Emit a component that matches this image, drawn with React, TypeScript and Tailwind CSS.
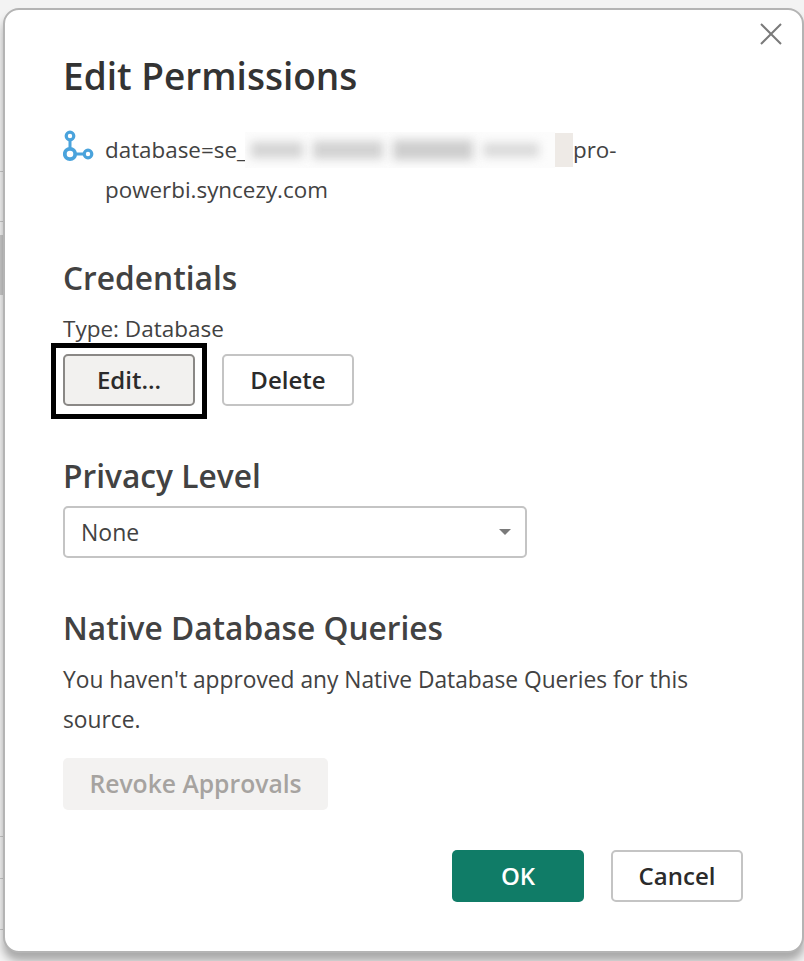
function Btn({ children, className }: { children: React.ReactNode; className: string }) {
  return (
    <button className={"h-[52px] rounded-[5px] font-semibold flex items-center justify-center " + className}>
      {children}
    </button>
  );
}

function Backdrop() {
  return (
    <>
      <div className="absolute left-0 w-[4px] top-[171px] h-[1px] bg-[#c8c8c8]" />
      <div className="absolute left-0 w-[4px] top-[221px] h-[1px] bg-[#c8c8c8]" />
      <div className="absolute left-0 w-[4px] top-[235px] h-[60px] bg-[#c9c9c9]" />
      <div className="absolute left-0 w-[4px] top-[836px] h-[1px] bg-[#c8c8c8]" />
      <div className="absolute left-0 w-[4px] top-[878px] h-[1px] bg-[#c8c8c8]" />
      <div className="absolute left-0 w-[4px] top-[929px] h-[1px] bg-[#c8c8c8]" />
      <div className="absolute right-0 w-[2px] top-[171px] h-[1px] bg-[#c8c8c8]" />
      <div className="absolute right-0 w-[2px] top-[221px] h-[1px] bg-[#c8c8c8]" />
      <div className="absolute right-0 w-[2px] top-[836px] h-[1px] bg-[#c8c8c8]" />
    </>
  );
}

export default function App() {
  return (
    <div className="relative w-[804px] h-[961px] bg-[#f3f3f3] overflow-hidden pt-2 pl-[3px] font-['Open_Sans','Noto_Sans',sans-serif]">
      <Backdrop />
      <div className="relative w-[801px] h-[945px] bg-white border-2 border-[#b4b4b4] rounded-[16px] pl-[58px] pt-[41px] text-[#424242] shadow-[0_8px_8px_rgba(0,0,0,0.3)]">
        <button className="absolute top-[12px] right-[19px] text-[#7a7a7a]">
          <svg width="24" height="24" viewBox="0 0 24 24" fill="none" stroke="currentColor" strokeWidth="2">
            <path d="M2 2 L22 22 M22 2 L2 22" />
          </svg>
        </button>
        <h1 className="text-[37px] leading-[50px] font-semibold text-[#333]">Edit Permissions</h1>
        <div className="flex mt-[29px] h-[82px]">
          <svg width="32" height="32" viewBox="0 0 32 32" fill="none" stroke="#4aa3dc" className="shrink-0">
            <circle cx="7" cy="6" r="3.8" strokeWidth="3.2" />
            <circle cx="7" cy="24" r="5.2" strokeWidth="3.8" />
            <circle cx="25" cy="24" r="3.8" strokeWidth="3.2" />
            <path d="M7 10 V19 M12 24 H21" strokeWidth="3" />
          </svg>
          <div className="ml-[10px] w-[560px] text-[22.4px] leading-[40px] text-[#424242]">
            <div className="flex items-center">
              <span className="w-[140px] shrink-0 whitespace-nowrap">database=se_</span>
              <span className="w-[310px] h-[36px] bg-[#fcfcfc] shrink-0 flex items-center gap-[10px] pl-[6px] overflow-hidden">
                <span className="w-[52px] h-[16px] bg-[#d4d4d4] blur-[5px]" />
                <span className="w-[70px] h-[18px] bg-[#d2d2d2] blur-[5px]" />
                <span className="w-[80px] h-[20px] bg-[#cecece] blur-[5px]" />
                <span className="w-[56px] h-[14px] bg-[#dadada] blur-[5px]" />
              </span>
              <span className="w-[18px] h-[34px] bg-[#eeeae6] shrink-0" />
              <span>pro-</span>
            </div>
            <div>powerbi.syncezy.com</div>
          </div>
        </div>
        <h2 className="mt-[44px] text-[31.7px] leading-[44px] font-semibold">Credentials</h2>
        <div className="mt-[14px] text-[22.5px] leading-[30px]">Type: Database</div>
        <div className="flex items-center mt-[10px] gap-[27px]">
          <div className="relative">
            <div className="absolute -top-[11px] -bottom-[13px] -left-[12px] -right-[12px] border-[5px] border-black" />
            <Btn className="w-[132px] text-[24px] bg-[#f2f1ef] border-2 border-[#8a8886] text-[#2b2b2b]">Edit...</Btn>
          </div>
          <Btn className="w-[132px] text-[24px] bg-white border-2 border-[#c4c4c4] text-[#2b2b2b]">Delete</Btn>
        </div>
        <h2 className="mt-[48px] text-[31.7px] leading-[44px] font-semibold">Privacy Level</h2>
        <button className="mt-[8px] w-[464px] h-[52px] rounded-[5px] border-2 border-[#c4c4c4] flex items-center justify-between pl-[16px] pr-[14px] text-[23px]">
          <span>None</span>
          <svg width="12" height="6" viewBox="0 0 12 6"><path d="M0 0 H12 L6 6 Z" fill="#7a7a7a" /></svg>
        </button>
        <h2 className="mt-[48px] text-[31.7px] leading-[44px] font-semibold">Native Database Queries</h2>
        <p className="mt-[10px] w-[660px] text-[22.75px] leading-[40px]">You haven't approved any Native Database Queries for this source.</p>
        <Btn className="mt-[18px] w-[265px] text-[24.7px] bg-[#f3f2f1] text-[#a6a3a0]">Revoke Approvals</Btn>
        <div className="flex justify-end gap-[27px] mr-[59px] mt-[40px]">
          <Btn className="w-[132px] text-[24px] bg-[#107c67] text-white">OK</Btn>
          <Btn className="w-[132px] text-[24px] bg-white border-2 border-[#c4c4c4] text-[#2b2b2b]">Cancel</Btn>
        </div>
      </div>
    </div>
  );
}
